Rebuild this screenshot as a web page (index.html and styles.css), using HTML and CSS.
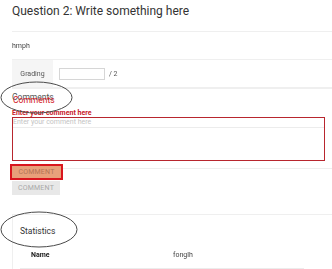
FILE: index.html
```html
<!DOCTYPE html>
<html>
<head>
<meta charset="utf-8">
<link rel="stylesheet" href="styles.css">
</head>
<body>
<div class="page">
  <div class="main">
    <h1 class="title">Question 2: Write something here</h1>
    <div class="answer">hmph</div>
    <div class="grading">
      <div class="grading-label">Grading</div>
      <div class="grading-input"></div>
      <div class="grading-max">/ 2</div>
    </div>
    <div class="comments-title">Comments</div>
    <div class="comment-label">Enter your comment here</div>
    <div class="comment-box">
      <div class="comment-input">Enter your comment here</div>
    </div>
    <div class="actions">
      <div class="btn btn-highlight">COMMENT</div>
    </div>
    <div class="btn btn-disabled">COMMENT</div>
    <div class="stats-card">
      <div class="stats-title">Statistics</div>
      <div class="stats-row">
        <div class="stats-name">Name</div>
        <div class="stats-value">fonglh</div>
      </div>
    </div>
  </div>

  <div class="annot-red-title">Comments</div>
  <svg class="annot-ellipse annot-comments" width="73" height="33" viewBox="0 0 73 33"><ellipse cx="36.5" cy="16.5" rx="35.5" ry="15.5" fill="none" stroke="#4a4a4a" stroke-width="1"/></svg>
  <svg class="annot-ellipse annot-stats" width="78" height="37" viewBox="0 0 78 37"><ellipse cx="39" cy="18.5" rx="38" ry="17.5" fill="none" stroke="#4a4a4a" stroke-width="1"/></svg>
</div>
</body>
</html>
```

FILE: styles.css
```css
html, body {
  margin: 0;
  padding: 0;
  background: #fff;
}
body {
  font-family: Roboto, "Liberation Sans", sans-serif;
  color: #333;
}
.page {
  position: relative;
  width: 332px;
  height: 269px;
  overflow: hidden;
}
.main {
  margin-left: 12px;
}
.title {
  margin: 0;
  height: 31px;
  line-height: 23px;
  font-size: 12px;
  font-weight: 400;
  color: #333;
  border-bottom: 1px solid #efefef;
}
.answer {
  height: 27px;
  font-size: 7px;
  line-height: 29px;
  color: #444;
  filter: grayscale(1);
}
.grading {
  display: flex;
  align-items: center;
  height: 27px;
  border-top: 1px solid #efefef;
  border-bottom: 2px solid #efefef;
  font-size: 7px;
  color: #555;
  filter: grayscale(1);
}
.grading-label {
  width: 41px;
  height: 100%;
  background: #f5f5f5;
  display: flex;
  align-items: center;
  justify-content: center;
}
.grading-input {
  margin-left: 6px;
  width: 44px;
  height: 10px;
  border: 1px solid #d6d6d6;
  background: #fff;
}
.grading-max {
  margin-left: 4px;
}
.comments-title {
  margin-top: 3px;
  font-size: 8.5px;
  line-height: 11px;
  color: #555;
}
.comment-label {
  margin-top: 6px;
  height: 8px;
  font-size: 7px;
  line-height: 8px;
  font-weight: 700;
  color: #c8202a;
}
.comment-box {
  margin-right: 7px;
  height: 42px;
  border: 1px solid #b8262e;
}
.comment-input {
  height: 9px;
  font-size: 7px;
  line-height: 9px;
  color: #c4c4c4;
  border-bottom: 1px solid #ececec;
}
.actions {
  margin-top: 3px;
  display: flex;
  background: linear-gradient(#eeeeee, #eeeeee) no-repeat 0 4px / 100% 1px;
}
.btn {
  display: flex;
  align-items: center;
  justify-content: center;
  font-size: 7px;
  letter-spacing: 0.2px;
}
.btn-highlight {
  margin-left: -2px;
  width: 49px;
  height: 12px;
  border: 2px solid #d9161e;
  background: #e8a07a;
  color: #b27455;
}
.btn-disabled {
  margin-top: 1px;
  width: 48px;
  height: 14px;
  background: #e8e8e8;
  color: #a8a8a8;
}
.stats-card {
  margin-top: 19px;
  border-top: 1px solid #efefef;
  border-left: 1px solid #efefef;
  padding-left: 7px;
  height: 60px;
}
.stats-title {
  margin-top: 10px;
  font-size: 8.5px;
  line-height: 12px;
  color: #333;
}
.stats-row {
  display: flex;
  width: 284px;
  margin-top: 11px;
  height: 20px;
  border-bottom: 1px solid #ececec;
  font-size: 7px;
  line-height: 14px;
  filter: grayscale(1);
}
.stats-name {
  width: 142px;
  padding-left: 11px;
  font-weight: 700;
  color: #222;
}
.stats-value {
  color: #444;
}
.annot-red-title {
  position: absolute;
  left: 13px;
  top: 95px;
  font-size: 8.5px;
  line-height: 11px;
  color: #d2141c;
}
.annot-ellipse {
  position: absolute;
  display: block;
}
.annot-comments {
  left: 0px;
  top: 81px;
}
.annot-stats {
  left: 0px;
  top: 211px;
}
```
